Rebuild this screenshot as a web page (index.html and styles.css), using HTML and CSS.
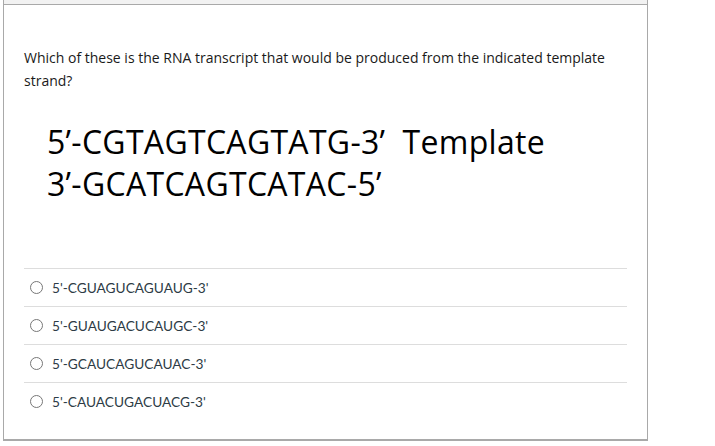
FILE: index.html
```html
<!DOCTYPE html>
<html>
<head>
<meta charset="utf-8">
<link rel="stylesheet" href="styles.css">
</head>
<body>
<div class="card">
  <div class="topbar"></div>
  <div class="content">
    <p class="question">Which of these is the RNA transcript that would be produced from the indicated template strand?</p>
    <div class="strands">
      <div class="strand">5’-CGTAGTCAGTATG-3’&nbsp; Template</div>
      <div class="strand">3’-GCATCAGTCATAC-5’</div>
    </div>
    <ul class="options">
      <li class="option"><span class="radio"></span><span class="label">5'-CGUAGUCAGUAUG-3'</span></li>
      <li class="option"><span class="radio"></span><span class="label">5'-GUAUGACUCAUGC-3'</span></li>
      <li class="option"><span class="radio"></span><span class="label">5'-GCAUCAGUCAUAC-3'</span></li>
      <li class="option"><span class="radio"></span><span class="label">5'-CAUACUGACUACG-3'</span></li>
    </ul>
  </div>
</div>
</body>
</html>
```
FILE: styles.css
```css
html, body {
  margin: 0;
  padding: 0;
  background: #ffffff;
}
.card {
  margin-left: 3px;
  width: 643px;
  height: 439px;
  border-left: 1px solid #a9a9a9;
  border-right: 1px solid #a9a9a9;
  border-bottom: 2px solid #a9a9a9;
  box-sizing: content-box;
}
.topbar {
  height: 4px;
  background: #f2f2f2;
  border-bottom: 1px solid #a9a9a9;
}
.content {
  padding: 0 20px 0 20px;
}
.question {
  margin: 41px 0 0 0;
  font-family: "Open Sans", sans-serif;
  font-size: 14px;
  line-height: 23px;
  color: #1a1a1a;
  width: 602px;
}
.strands {
  margin: 29px 0 0 23px;
  font-family: "Open Sans", sans-serif;
  font-size: 32px;
  letter-spacing: 0.3px;
  line-height: 42px;
  color: #000;
}
.options {
  list-style: none;
  margin: 63px 0 0 0;
  padding: 0;
  width: 603px;
}
.option {
  display: flex;
  align-items: center;
  height: 37px;
  border-top: 1px solid #dddddd;
  font-family: Lato, sans-serif;
  font-size: 13.7px;
  color: #2d3b45;
}
.radio {
  width: 11px;
  height: 11px;
  border: 1px solid #777;
  border-radius: 50%;
  margin: 0 9px 0 6px;
  box-sizing: content-box;
}
```
